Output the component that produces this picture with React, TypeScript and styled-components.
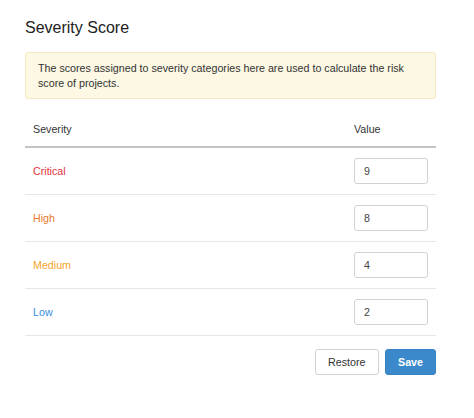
import { useState } from 'react'
import styled, { createGlobalStyle } from 'styled-components'

type Level = 'critical' | 'high' | 'medium' | 'low'

const levelColors: Record<Level, string> = {
  critical: '#e2323e',
  high: '#ea7a2c',
  medium: '#f4a52b',
  low: '#3a8ee4',
}

const defaults: { level: Level; label: string; value: string }[] = [
  { level: 'critical', label: 'Critical', value: '9' },
  { level: 'high', label: 'High', value: '8' },
  { level: 'medium', label: 'Medium', value: '4' },
  { level: 'low', label: 'Low', value: '2' },
]

export default function App() {
  const [scores, setScores] = useState(defaults)

  function updateScore(level: Level, value: string) {
    setScores((prev) => prev.map((s) => (s.level === level ? { ...s, value } : s)))
  }

  return (
    <>
      <GlobalStyle />
      <Page>
        <Title>Severity Score</Title>
        <Notice>
          The scores assigned to severity categories here are used to calculate the risk score of
          projects.
        </Notice>
        <ScoreTable>
          <thead>
            <tr>
              <HeadCell>Severity</HeadCell>
              <HeadCell $value>Value</HeadCell>
            </tr>
          </thead>
          <tbody>
            {scores.map((s) => (
              <Row key={s.level}>
                <Cell>
                  <LevelName $level={s.level}>{s.label}</LevelName>
                </Cell>
                <Cell $value>
                  <ScoreInput
                    type="text"
                    value={s.value}
                    onChange={(e) => updateScore(s.level, e.target.value)}
                  />
                </Cell>
              </Row>
            ))}
          </tbody>
        </ScoreTable>
        <Actions>
          <Button onClick={() => setScores(defaults)}>Restore</Button>
          <Button $primary>Save</Button>
        </Actions>
      </Page>
    </>
  )
}

const GlobalStyle = createGlobalStyle`
  html, body {
    margin: 0;
    padding: 0;
    background: #ffffff;
  }
  body {
    font-family: "Liberation Sans", Arial, Helvetica, sans-serif;
    color: #333333;
  }
`

const Page = styled.div`
  width: 411px;
  padding: 19px 0 0 25px;
`

const Title = styled.h1`
  margin: 0 0 15px;
  font-size: 16px;
  line-height: 18px;
  font-weight: 400;
  color: #222222;
`

const Notice = styled.div`
  box-sizing: border-box;
  height: 47px;
  padding: 7.5px 12px;
  background: #fcf8e3;
  border: 1px solid #f7e9c3;
  border-radius: 3px;
  font-size: 10.7px;
  line-height: 15.5px;
  color: #333333;
`

const ScoreTable = styled.table`
  width: 100%;
  margin-top: 13px;
  border-collapse: collapse;
  font-size: 10.7px;
`

const HeadCell = styled.th<{ $value?: boolean }>`
  height: 34px;
  padding: 0 8px;
  text-align: left;
  font-weight: 400;
  color: #333333;
  border-bottom: 2px solid #c4c4c4;
  width: ${({ $value }) => ($value ? '74px' : 'auto')};
`

const Row = styled.tr`
  border-bottom: 1px solid #e6e6e6;
`

const Cell = styled.td<{ $value?: boolean }>`
  height: 46px;
  padding: 0 8px;
  vertical-align: middle;
  width: ${({ $value }) => ($value ? '74px' : 'auto')};
`

const LevelName = styled.span<{ $level: Level }>`
  color: ${({ $level }) => levelColors[$level]};
`

const ScoreInput = styled.input`
  display: block;
  box-sizing: border-box;
  width: 74px;
  height: 26px;
  padding: 0 9px;
  border: 1px solid #d2d2d2;
  border-radius: 3px;
  font-family: inherit;
  font-size: 10.7px;
  color: #444444;
  outline: none;
`

const Actions = styled.div`
  display: flex;
  justify-content: flex-end;
  gap: 6px;
  margin-top: 13px;
`

const Button = styled.button<{ $primary?: boolean }>`
  box-sizing: border-box;
  height: 26px;
  padding: 0 ${({ $primary }) => ($primary ? '12px' : '12.5px')};
  border-radius: 3px;
  font-family: inherit;
  font-size: 10.7px;
  cursor: pointer;
  border: 1px solid ${({ $primary }) => ($primary ? '#3784c6' : '#d2d2d2')};
  background: ${({ $primary }) => ($primary ? '#3b89cb' : '#ffffff')};
  color: ${({ $primary }) => ($primary ? '#ffffff' : '#333333')};
  font-weight: ${({ $primary }) => ($primary ? 700 : 400)};
`
